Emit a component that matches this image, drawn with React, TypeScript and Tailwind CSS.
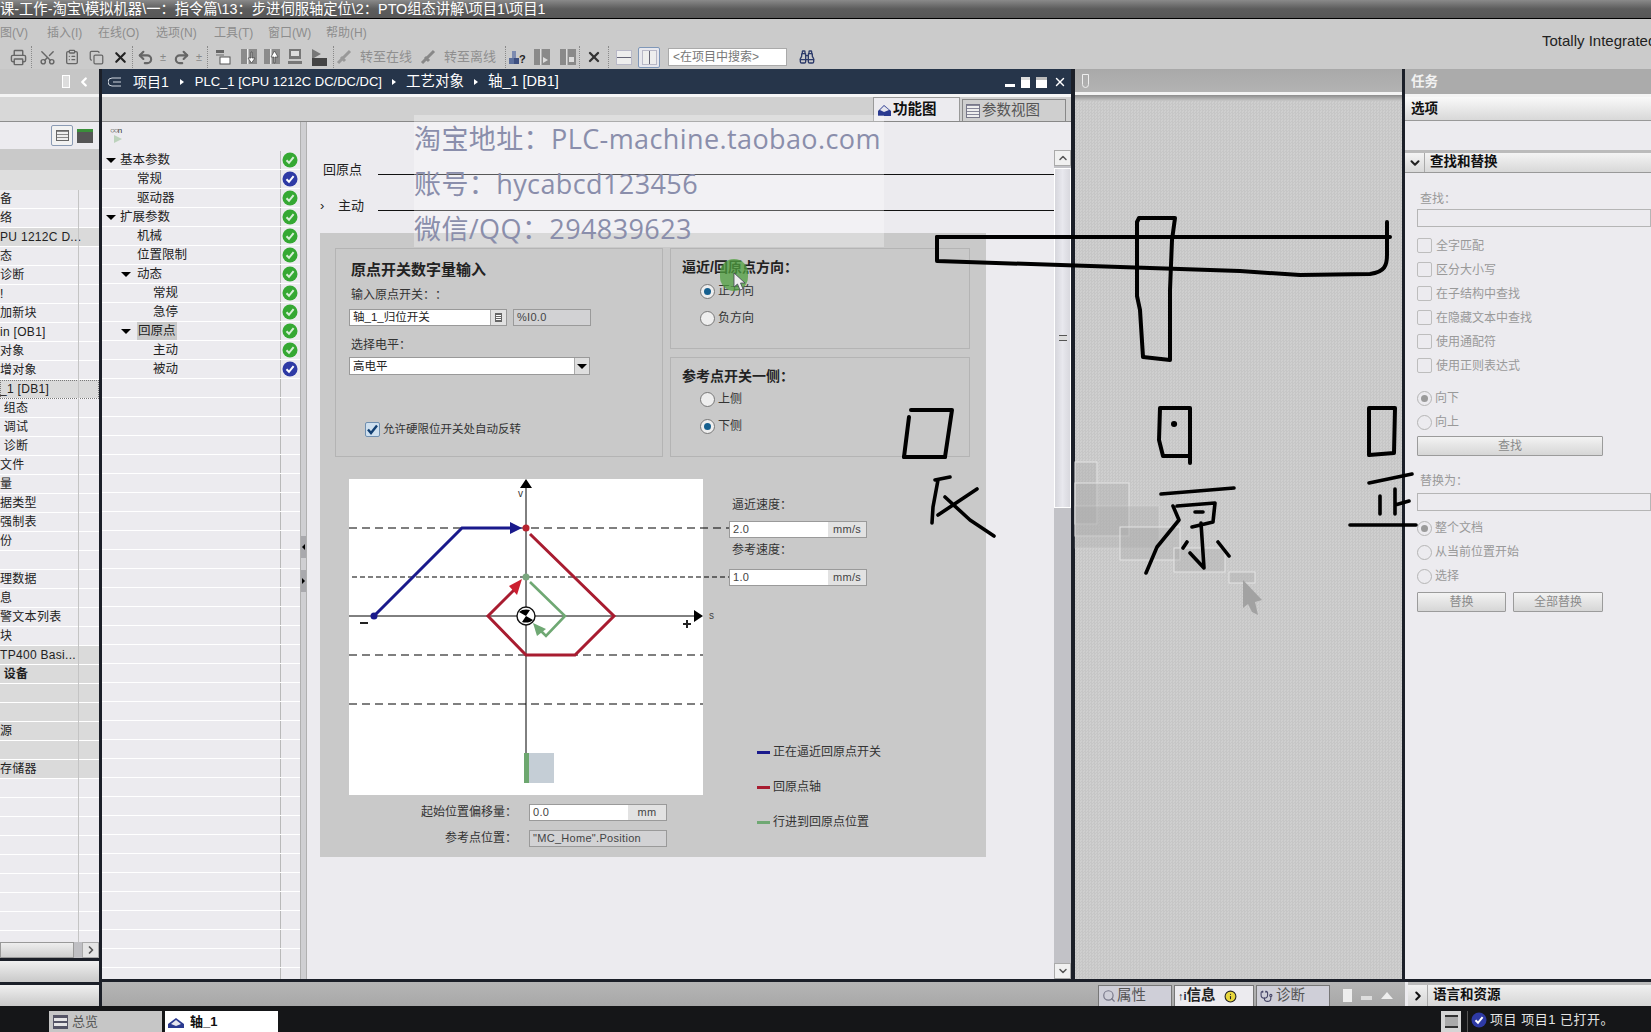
import { ChevronDown, ChevronLeft, ChevronRight, ChevronUp, Copy, Redo2, Scissors, Undo2, X, ClipboardList, Printer, Search, Info, Stethoscope, Binoculars } from 'lucide-react';

/* ---------- data ---------- */
const MENU = [
  { t: '图(V)', w: 'w-[47px]' },
  { t: '插入(I)', w: 'w-[51px]' },
  { t: '在线(O)', w: 'w-[58px]' },
  { t: '选项(N)', w: 'w-[58px]' },
  { t: '工具(T)', w: 'w-[54px]' },
  { t: '窗口(W)', w: 'w-[58px]' },
  { t: '帮助(H)', w: 'w-[50px]' },
];

const PROJECT = [
  { t: '备' }, { t: '络' }, { t: 'PU 1212C D...', g: 1 }, { t: '态' }, { t: '诊断' }, { t: '!' },
  { t: '加新块' }, { t: 'in [OB1]' }, { t: '对象' }, { t: '增对象' }, { t: '_1 [DB1]', sel: 1 },
  { t: ' 组态' }, { t: ' 调试' }, { t: ' 诊断' }, { t: '文件' }, { t: '量' }, { t: '据类型' },
  { t: '强制表' }, { t: '份' }, { t: '' }, { t: '理数据' }, { t: '息' }, { t: '警文本列表' }, { t: '块' },
  { t: 'TP400 Basi...', g: 1 }, { t: ' 设备', g: 1, b: 1 }, { t: '', g: 1 }, { t: '', g: 1 }, { t: '源', g: 1 },
  { t: '', g: 1 }, { t: '存储器', g: 1 },
];

const NAV = [
  { t: '基本参数', lvl: 0, arrow: true, ok: 'g' },
  { t: '常规', lvl: 1, ok: 'b' },
  { t: '驱动器', lvl: 1, ok: 'g' },
  { t: '扩展参数', lvl: 0, arrow: true, ok: 'g' },
  { t: '机械', lvl: 1, ok: 'g' },
  { t: '位置限制', lvl: 1, ok: 'g' },
  { t: '动态', lvl: 1, arrow: true, ok: 'g' },
  { t: '常规', lvl: 2, ok: 'g' },
  { t: '急停', lvl: 2, ok: 'g' },
  { t: '回原点', lvl: 1, arrow: true, ok: 'g', sel: true },
  { t: '主动', lvl: 2, ok: 'g' },
  { t: '被动', lvl: 2, ok: 'b' },
];

/* ---------- small drawings ---------- */
function Ok({ kind }: { kind: string }) {
  return (
    <svg width="16" height="16" viewBox="0 0 16 16">
      <circle cx="8" cy="8" r="7.5" fill={kind === 'g' ? '#35a833' : '#2e3aa5'} />
      <path d="M4.5 8.2 7 10.8 11.6 5.2" fill="none" stroke={kind === 'g' ? '#d8efd8' : '#fff'} strokeWidth="2" />
    </svg>
  );
}

function Tri() {
  return <span className="block w-0 h-0 border-x-[5px] border-x-transparent border-t-[5px] border-t-black" />;
}

function Crumb() {
  return <span className="block w-0 h-0 border-y-[3.5px] border-y-transparent border-l-[4px] border-l-white" />;
}

function Tool({ w, children }: { w: string; children?: React.ReactNode }) {
  return <div className={`${w} h-[24px] shrink-0 flex items-center justify-center text-[#666]`}>{children}</div>;
}

function Sep() {
  return <div className="w-px h-[22px] mx-[1px] shrink-0 border-l border-dotted border-[#8a8a8a]" />;
}

function BlockIcon({ d }: { d: string }) {
  return (
    <svg width="18" height="18" viewBox="0 0 18 18">
      <rect x="1" y="1" width="16" height="15" fill="#8b8b8b" />
      <rect x="7" y="1" width="1.5" height="15" fill="#eee" />
      <path d={d} fill="#fff" stroke="#333" strokeWidth="0.6" />
    </svg>
  );
}

function Field({ w, value, unit, grey }: { w: string; value: string; unit?: string; grey?: boolean }) {
  return (
    <div className={`${w} h-[17px] flex border border-[#9a9a9a] ${grey ? 'bg-[#d2d2d4]' : 'bg-white'} text-[11px] text-[#444] tracking-[0.3px]`}>
      <span className="flex-1 pl-[3px] leading-[15px] whitespace-nowrap overflow-hidden">{value}</span>
      {unit && <span className="w-[38px] text-center bg-[#e2e2e2] leading-[15px]">{unit}</span>}
    </div>
  );
}

function Radio({ on, off, label }: { on?: boolean; off?: boolean; label: string }) {
  const ring = off ? 'border-[#b5b5b5] bg-[#ecebef]' : 'border-[#777] bg-[#eeeeee]';
  return (
    <div className="flex items-center h-[16px]">
      <span className={`w-[15px] h-[15px] rounded-full border flex items-center justify-center ${ring}`}>
        {on && <span className={`w-[7px] h-[7px] rounded-full ${off ? 'bg-[#9a9a9a]' : 'bg-[#16608f]'}`} />}
      </span>
      <span className={`ml-[3px] ${off ? 'text-[#999]' : 'text-[#333]'}`}>{label}</span>
    </div>
  );
}

function DisCheck({ label }: { label: string }) {
  return (
    <div className="flex items-center h-[15px] mb-[9px]">
      <span className="w-[15px] h-[15px] rounded-[2px] border border-[#bdbdbd] bg-[#ecebef]" />
      <span className="ml-[4px] text-[#999]">{label}</span>
    </div>
  );
}

function Btn({ w, label }: { w: string; label: string }) {
  return (
    <div className={`${w} h-[20px] border border-[#9b9b9b] rounded-[1px] bg-gradient-to-b from-[#f3f3f3] to-[#d6d6d6] text-[#8a8a8a] text-center leading-[18px]`}>{label}</div>
  );
}

function Plot() {
  return (
    <svg width="380" height="316" viewBox="0 0 380 316" className="block shrink-0 font-['Liberation_Sans',sans-serif]">
      <rect width="354" height="316" fill="#fff" />
      <g stroke="#000" strokeWidth="1.1" strokeDasharray="8 5">
        <line x1="0" y1="49" x2="380" y2="49" />
        <line x1="3" y1="98" x2="380" y2="98" strokeDasharray="5 3" />
        <line x1="0" y1="176" x2="354" y2="176" />
        <line x1="0" y1="225" x2="354" y2="225" />
      </g>
      <line x1="0" y1="137" x2="346" y2="137" stroke="#000" />
      <line x1="177" y1="8" x2="177" y2="274" stroke="#000" />
      <path d="M354 137 345 131V143Z M177 0 171 9H183Z" fill="#000" />
      <text x="169" y="18" fontSize="10" fill="#333">v</text>
      <text x="360" y="140" fontSize="10" fill="#444">s</text>
      <path d="M11 144H19M334 145H342M338 141V149" stroke="#222" strokeWidth="2" />
      {/* blue */}
      <path d="M25 137 113 49H161" fill="none" stroke="#1a1a8c" strokeWidth="3" />
      <path d="M173 49 161 43V55Z" fill="#1a1a8c" />
      <circle cx="25" cy="137" r="3.5" fill="#1a1a8c" />
      {/* red */}
      <path d="M181 55 265 137 226 176H177L139 137 168 108" fill="none" stroke="#a81c30" strokeWidth="3" />
      <path d="M173 100 160 107 168 116Z" fill="#cc1f30" />
      <circle cx="177" cy="49" r="3.5" fill="#b8232f" />
      {/* green */}
      <path d="M181 103 216 137 197 157 190 150" fill="none" stroke="#6fa873" strokeWidth="2.6" />
      <path d="M184 144 188 157 197 150Z" fill="#6fa873" />
      <circle cx="177" cy="98" r="3.5" fill="#7aa67e" />
      {/* home */}
      <circle cx="177" cy="137" r="9" fill="#fff" stroke="#111" strokeWidth="1.4" />
      <path d="M170 133C173 130 178 130 181 131L177 137ZM184 141C181 144 176 144 173 143L177 137Z" fill="#000" />
      <rect x="179" y="274" width="26" height="30" fill="#c5ced6" />
      <rect x="175" y="274" width="5" height="30" fill="#6da76f" />
    </svg>
  );
}

/* ---------- page ---------- */
export default function App() {
  const blank = Array.from({ length: 34 });
  return (
    <div className="relative w-[1651px] h-[1032px] overflow-hidden bg-[#cbcbcb] text-[12px] text-[#222] [text-spacing-trim:space-all] font-['Liberation_Sans','Noto_Sans_CJK_SC',sans-serif]">
      {/* title */}
      <div className="h-[19px] border-b border-black bg-gradient-to-b from-[#8a8a8a] via-[#5c5c5c] to-[#575757] text-white text-[14.3px] leading-[18px] whitespace-nowrap overflow-hidden">
        课-工作-淘宝\模拟机器\一：指令篇\13：步进伺服轴定位\2：PTO组态讲解\项目1\项目1
      </div>

      {/* menu */}
      <div className="h-[26px] pt-[2px] flex items-center text-[#8d8d8d] whitespace-nowrap">
        {MENU.map((m) => (
          <span key={m.t} className={`${m.w} shrink-0`}>{m.t}</span>
        ))}
      </div>

      {/* toolbar */}
      <div className="h-[24px] flex items-center relative">
        <div className="w-[6px] shrink-0" />
        <Tool w="w-[24px]"><Printer size={17} /></Tool>
        <Sep />
        <Tool w="w-[28px]"><Scissors size={17} className="-rotate-90" /></Tool>
        <Tool w="w-[22px]"><ClipboardList size={16} /></Tool>
        <Tool w="w-[26px]"><Copy size={15} /></Tool>
        <Tool w="w-[22px]"><X size={17} strokeWidth={3} className="text-[#222]" /></Tool>
        <Sep />
        <Tool w="w-[22px]"><Undo2 size={17} strokeWidth={3} /></Tool>
        <Tool w="w-[14px]"><span className="text-[11px] text-[#888]">±</span></Tool>
        <Tool w="w-[22px]"><Redo2 size={17} strokeWidth={3} /></Tool>
        <Tool w="w-[14px]"><span className="text-[11px] text-[#888]">±</span></Tool>
        <Sep />
        <Tool w="w-[28px]"><svg width="16" height="16" viewBox="0 0 16 16"><rect x="1" y="1" width="8" height="3" fill="#666" /><rect x="1" y="5" width="8" height="2" fill="#999" /><rect x="5" y="8" width="10" height="7" fill="#fff" stroke="#555" /></svg></Tool>
        <Tool w="w-[23px]"><BlockIcon d="M12 4V10H15L11.5 15 8 10H11V4Z" /></Tool>
        <Tool w="w-[24px]"><BlockIcon d="M12 15V9H15L11.5 3 8 9H11V15Z" /></Tool>
        <Tool w="w-[22px]"><svg width="16" height="18" viewBox="0 0 16 18"><rect x="2" y="1" width="12" height="10" fill="#777" /><rect x="4" y="3" width="8" height="5" fill="#ddd" /><rect x="1" y="13" width="14" height="3" fill="#777" /></svg></Tool>
        <Tool w="w-[26px]"><svg width="18" height="18" viewBox="0 0 18 18"><path d="M2 1 11 6 2 11Z" fill="#777" /><rect x="2" y="10" width="15" height="8" fill="#444" /></svg></Tool>
        <Sep />
        <Tool w="w-[18px]"><svg width="17" height="17" viewBox="0 0 17 17"><path d="M2 14 14 2M5 8 9 12" stroke="#999" strokeWidth="3" /></svg></Tool>
        <span className="w-[52px] shrink-0 ml-[7px] text-[13px] text-[#8f8f8f] whitespace-nowrap">转至在线</span>
        <Tool w="w-[32px]"><svg width="17" height="17" viewBox="0 0 17 17"><path d="M2 14 14 2M5 8 9 12" stroke="#888" strokeWidth="3" /></svg></Tool>
        <span className="w-[60px] shrink-0 text-[13px] text-[#8f8f8f] whitespace-nowrap">转至离线</span>
        <Sep />
        <Tool w="w-[20px]"><svg width="18" height="16" viewBox="0 0 18 16"><rect x="1" y="9" width="5" height="6" fill="#5c6f9c" /><rect x="6" y="9" width="5" height="6" fill="#3d4f80" /><rect x="4" y="2" width="4" height="7" fill="#7d8bb0" /><text x="11" y="14" fontSize="11" fontWeight="700" fill="#222">?</text></svg></Tool>
        <Tool w="w-[30px]"><svg width="16" height="16" viewBox="0 0 16 16"><rect width="16" height="16" fill="#8a8a8a" /><rect x="6" width="1.5" height="16" fill="#ddd" /><path d="M9 8 14 11 9 14Z" fill="#ddd" /></svg></Tool>
        <Tool w="w-[21px]"><svg width="16" height="16" viewBox="0 0 16 16"><rect width="16" height="16" fill="#8a8a8a" /><rect x="6" width="1.5" height="16" fill="#ddd" /><rect x="9" y="8" width="5" height="5" fill="#ddd" /></svg></Tool>
        <Sep />
        <Tool w="w-[26px]"><X size={16} strokeWidth={3.5} className="text-[#333]" /></Tool>
        <Sep />
        <Tool w="w-[28px]"><span className="w-[16px] h-[15px] border border-[#b9b9c8] bg-[linear-gradient(#eee_45%,#667_45%,#667_55%,#eee_55%)]" /></Tool>
        <div className="w-[22px] h-[21px] shrink-0 border border-[#7f97b8] bg-[#e8e8ee] rounded-[2px] flex items-center justify-center"><span className="w-[15px] h-[15px] border border-[#b9b9c8] bg-[linear-gradient(90deg,#eee_45%,#667_45%,#667_55%,#eee_55%)]" /></div>
        <div className="w-[119px] h-[18px] shrink-0 ml-[8px] border border-[#aaa] bg-white text-[#777] leading-[16px] pl-[4px] whitespace-nowrap">&lt;在项目中搜索&gt;</div>
        <Tool w="w-[40px]"><Binoculars size={16} className="text-[#2c3a6a]" /></Tool>
        <div className="ml-auto text-[15px] text-[#222] whitespace-nowrap w-[109px] overflow-hidden -mt-[31px]">Totally Integrated</div>
      </div>

      {/* workspace */}
      <div className="flex h-[937px] bg-[#1b1f28]">
        {/* project tree */}
        <div className="w-[99px] shrink-0 flex flex-col overflow-hidden bg-[#ecebef]">
          <div className="h-[25px] shrink-0 bg-[#c6c6c6] flex items-center justify-end gap-[7px] pr-[8px] text-white">
            <span className="w-[8px] h-[13px] border border-white bg-[#ddd]" />
            <ChevronLeft size={14} strokeWidth={4} />
          </div>
          <div className="h-[3px] shrink-0 bg-[#f4f4f4]" />
          <div className="h-[25px] shrink-0 bg-[#d8d8d8] border-b border-[#8e8e8e]" />
          <div className="h-[27px] shrink-0 flex items-center justify-end gap-[4px] pr-[6px]">
            <span className="w-[22px] h-[21px] border border-[#8b9bb4] bg-[#f2f2f2] rounded-[2px] flex items-center justify-center"><span className="w-[13px] h-[11px] border border-[#666] bg-[linear-gradient(#888_1px,#eee_1px)] bg-[length:100%_3px]" /></span>
            <span className="w-[16px] h-[14px] bg-[#555] border-t-[3px] border-[#3a8f3a]" />
          </div>
          <div className="h-[21px] shrink-0 bg-[#c9c9c9]" />
          <div className="h-[20px] shrink-0 bg-[#dedede]" />
          <div className="flex-1 overflow-hidden relative">
            {PROJECT.map((r, i) => (
              <div
                key={i}
                className={`h-[19px] border-b border-white w-[99px] whitespace-pre text-[12px] tracking-[0.3px] leading-[18px] ${r.g ? 'bg-[#dadada]' : ''} ${r.b ? 'font-bold' : ''} ${r.sel ? 'bg-[#dadada] outline-1 -outline-offset-1 outline-dotted outline-[#777] w-[80px]' : ''}`}
              >
                {r.t}
              </div>
            ))}
            {blank.slice(0, 8).map((_, i) => (
              <div key={i} className="h-[19px] border-b border-white" />
            ))}
            <div className="absolute inset-y-0 left-[78px] w-px bg-[#c4c4c4]" />
          </div>
          <div className="h-[16px] shrink-0 flex">
            <div className="w-[74px] bg-gradient-to-b from-[#eee] to-[#cfcfcf] border border-[#999]" />
            <div className="w-[8px] bg-[#bfbfc3]" />
            <div className="w-[17px] bg-[#e5e5e5] border border-[#aaa] flex items-center justify-center"><ChevronRight size={12} strokeWidth={3.5} className="text-[#555]" /></div>
          </div>
          <div className="h-[3px] shrink-0 bg-[#1b1f28]" />
          <div className="h-[21px] shrink-0 bg-gradient-to-b from-[#f0f0f0] to-[#c9c9c9]" />
          <div className="h-[3px] shrink-0 bg-[#1b1f28]" />
          <div className="h-[21px] shrink-0 bg-gradient-to-b from-[#f0f0f0] to-[#c9c9c9]" />
        </div>
        <div className="w-[3px] shrink-0" />

        {/* editor + center + tasks */}
        <div className="flex-1 flex flex-col">
          <div className="flex h-[910px]">
            {/* editor */}
            <div className="w-[969px] shrink-0 flex flex-col bg-[#ecebef]">
              <div className="h-[25px] pt-[1px] shrink-0 bg-[#26354a] text-white flex items-center whitespace-nowrap">
                <svg width="14" height="10" viewBox="0 0 14 10" className="ml-[6px]"><path d="M13 1H4a4 4 0 0 0 0 8h9M13 5H5" fill="none" stroke="#cfd6de" /></svg>
                <span className="ml-[11px] text-[14px]">项目1</span>
                <span className="mx-[11px]"><Crumb /></span>
                <span className="text-[13px]">PLC_1 [CPU 1212C DC/DC/DC]</span>
                <span className="mx-[10px]"><Crumb /></span>
                <span className="text-[14.5px]">工艺对象</span>
                <span className="mx-[10px]"><Crumb /></span>
                <span className="text-[14.5px]">轴_1 [DB1]</span>
                <div className="ml-auto flex items-center gap-[6px] pr-[4px]">
                  <span className="w-[10px] h-[3px] bg-white mt-[7px]" />
                  <span className="w-[9px] h-[11px] bg-white border-t-[3px] border-[#ddd]" />
                  <span className="w-[11px] h-[11px] bg-white border-t-[3px] border-[#bbb]" />
                  <X size={14} strokeWidth={2.5} />
                </div>
              </div>
              <div className="h-[3px] shrink-0 bg-[#f6f6f6]" />
              <div className="h-[25px] shrink-0 bg-[#d0d0d0] border-b border-[#888] flex justify-end items-end pr-[5px] gap-[2px] text-[14.5px]">
                <div className="w-[87px] h-[24px] bg-[#ecebef] border border-b-0 border-[#999] flex items-center pl-[3px] font-bold text-[#111] whitespace-nowrap">
                  <svg width="15" height="13" viewBox="0 0 15 13"><path d="M1 13V8L7 2 14 8V13H1Z" fill="#2a3a90" /><path d="M3 7 7 3 12 7 7 9Z" fill="#e6e6ee" /></svg>
                  <span className="ml-[1px]">功能图</span>
                </div>
                <div className="w-[104px] h-[22px] bg-[#cfcfcf] border border-b-0 border-[#888] flex items-center pl-[3px] text-[#555] whitespace-nowrap">
                  <span className="w-[14px] h-[14px] border border-[#778] bg-[linear-gradient(#889_1px,#eee_1px)] bg-[length:100%_3px]" />
                  <span className="ml-[2px]">参数视图</span>
                </div>
              </div>

              <div className="h-[857px] flex overflow-hidden">
                {/* nav */}
                <div className="w-[198px] shrink-0 overflow-hidden">
                  <div className="h-[29px] flex flex-col items-start pl-[8px] pt-[4px]">
                    <span className="text-[8px] leading-[9px] text-[#333] tracking-[-1px]">○○n</span>
                    <span className="ml-[4px] w-0 h-0 border-y-[4px] border-y-transparent border-l-[8px] border-l-[#bcd2bc]" />
                  </div>
                  {NAV.map((n) => (
                    <div key={n.t + n.lvl + n.ok} className="h-[19px] flex border-b border-white">
                      <div className="w-[178px] flex items-center">
                        <div className={n.lvl === 0 ? 'w-[18px] flex justify-center' : n.lvl === 1 ? (n.arrow ? 'w-[35px] flex justify-end pr-[6px]' : 'w-[35px]') : 'w-[51px]'}>
                          {n.arrow && <Tri />}
                        </div>
                        <span className={`text-[12.5px] leading-[18px] ${n.sel ? 'bg-[#c9c9c9] px-[1px]' : ''} text-[#222]`}>{n.t}</span>
                      </div>
                      <div className="w-[20px] border-l border-[#b9b9b9] flex items-center justify-center pr-[1px]"><Ok kind={n.ok} /></div>
                    </div>
                  ))}
                  {blank.map((_, i) => (
                    <div key={i} className="h-[19px] flex border-b border-white">
                      <div className="w-[178px]" />
                      <div className="w-[20px] border-l border-[#b9b9b9]" />
                    </div>
                  ))}
                </div>

                {/* splitter */}
                <div className="w-[7px] shrink-0 bg-[#cfcfd2] border-x border-[#b0b0b0] flex flex-col">
                  <div className="h-[414px]" />
                  <div className="h-[22px] bg-[#a9a9ad] flex items-center justify-center"><span className="w-0 h-0 border-y-[3px] border-y-transparent border-r-[3px] border-r-black" /></div>
                  <div className="h-[12px]" />
                  <div className="h-[22px] bg-[#a9a9ad] flex items-center justify-center"><span className="w-0 h-0 border-y-[3px] border-y-transparent border-l-[3px] border-l-black" /></div>
                </div>

                {/* parameter area */}
                <div className="w-[747px] shrink-0 overflow-hidden">
                  <div className="h-[58px] flex items-end">
                    <span className="ml-[16px] text-[13px] leading-[20px] text-[#222] w-[55px]">回原点</span>
                    <span className="flex-1 h-px bg-[#111] mb-[5px]" />
                  </div>
                  <div className="h-[36px] flex items-end">
                    <span className="ml-[13px] w-[18px] text-[13px] leading-[20px]">›</span>
                    <span className="text-[13px] leading-[20px] w-[40px]">主动</span>
                    <span className="flex-1 h-px bg-[#111] mb-[5px]" />
                  </div>
                  <div className="mt-[17px] ml-[13px] w-[666px] h-[624px] bg-[#c9c9c9] pt-[15px] pl-[15px]">
                    <div className="flex gap-[7px] h-[209px]">
                      <div className="w-[328px] border border-[#b4b4b4] pl-[15px] pt-[11px]">
                        <div className="text-[15px] font-bold leading-[20px] text-[#222]">原点开关数字量输入</div>
                        <div className="mt-[6px] leading-[18px] text-[#333]">输入原点开关：：</div>
                        <div className="mt-[5px] -ml-[2px] flex gap-[6px]">
                          <div className="w-[158px] h-[17px] border border-[#999] bg-white flex text-[11.5px] leading-[15px] pl-[3px]">
                            <span className="flex-1">轴_1_归位开关</span>
                            <span className="w-[16px] border-l border-[#aaa] bg-[#e2e2e2] flex items-center justify-center"><span className="w-[7px] h-[9px] border border-[#666] bg-[linear-gradient(#666_1px,#fff_1px)] bg-[length:100%_2px]" /></span>
                          </div>
                          <Field w="w-[78px]" value="%I0.0" grey />
                        </div>
                        <div className="mt-[10px] leading-[18px] text-[#333]">选择电平：</div>
                        <div className="mt-[3px] -ml-[2px] w-[241px] h-[18px] border border-[#999] bg-white flex text-[11.5px] leading-[16px] pl-[3px]">
                          <span className="flex-1">高电平</span>
                          <span className="w-[15px] border-l border-[#aaa] bg-[#dedede] flex items-center justify-center"><Tri /></span>
                        </div>
                        <div className="mt-[46px] ml-[14px] flex items-center">
                          <span className="w-[15px] h-[15px] rounded-[2px] border border-[#6f8fb0] bg-[#cfe0ef] flex items-center justify-center"><svg width="11" height="11" viewBox="0 0 11 11"><path d="M1 5.5 4 9 10 1.5" fill="none" stroke="#123f72" strokeWidth="2.4" /></svg></span>
                          <span className="ml-[3px] text-[#333] text-[11.5px]">允许硬限位开关处自动反转</span>
                        </div>
                      </div>
                      <div className="w-[300px] flex flex-col gap-[8px]">
                        <div className="h-[101px] border border-[#b4b4b4] pl-[11px] pt-[8px]">
                          <div className="font-bold text-[14px] leading-[20px] text-[#222]">逼近/回原点方向：</div>
                          <div className="mt-[6px] ml-[18px]"><Radio on label="正方向" /></div>
                          <div className="mt-[11px] ml-[18px]"><Radio label="负方向" /></div>
                        </div>
                        <div className="h-[100px] border border-[#b4b4b4] pl-[11px] pt-[8px]">
                          <div className="font-bold text-[14px] leading-[20px] text-[#222]">参考点开关一侧：</div>
                          <div className="mt-[5px] ml-[18px]"><Radio label="上侧" /></div>
                          <div className="mt-[11px] ml-[18px]"><Radio on label="下侧" /></div>
                        </div>
                      </div>
                    </div>

                    <div className="flex mt-[22px] ml-[14px]">
                      <div className="w-[380px] shrink-0">
                        <Plot />
                        <div className="mt-[8px] flex items-center">
                          <span className="w-[168px] text-right text-[#333]">起始位置偏移量：</span>
                          <span className="ml-[12px]"><Field w="w-[138px]" value="0.0" unit="mm" /></span>
                        </div>
                        <div className="mt-[8px] flex items-center">
                          <span className="w-[168px] text-right text-[#333]">参考点位置：</span>
                          <span className="ml-[12px]"><Field w="w-[138px]" value={'"MC_Home".Position'} grey /></span>
                        </div>
                      </div>
                      <div className="flex flex-col">
                        <div className="mt-[17px] ml-[3px] leading-[18px] text-[#333]">逼近速度：</div>
                        <div className="mt-[7px]"><Field w="w-[138px]" value="2.0" unit="mm/s" /></div>
                        <div className="mt-[3px] ml-[3px] leading-[18px] text-[#333]">参考速度：</div>
                        <div className="mt-[10px]"><Field w="w-[138px]" value="1.0" unit="mm/s" /></div>
                        <div className="mt-[157px] ml-[28px] flex flex-col gap-[17px] text-[#333]">
                          <div className="flex items-center h-[18px] whitespace-nowrap"><span className="w-[13px] h-[3px] bg-[#1a1a8c] mr-[3px]" />正在逼近回原点开关</div>
                          <div className="flex items-center h-[18px] whitespace-nowrap"><span className="w-[13px] h-[3px] bg-[#a81c30] mr-[3px]" />回原点轴</div>
                          <div className="flex items-center h-[18px] whitespace-nowrap"><span className="w-[13px] h-[3px] bg-[#6fa873] mr-[3px]" />行进到回原点位置</div>
                        </div>
                      </div>
                    </div>
                  </div>
                </div>

                {/* scrollbar */}
                <div className="w-[17px] shrink-0 flex flex-col bg-[#c2c2c7]">
                  <div className="h-[28px] bg-[#ecebef]" />
                  <div className="h-[16px] border border-[#aaa] bg-[#f0f0f0] flex items-center justify-center"><ChevronUp size={12} strokeWidth={3} className="text-[#555]" /></div>
                  <div className="h-[340px] mt-[2px] border border-white bg-gradient-to-r from-[#d6d6dc] via-[#e8e8ee] to-[#d8d8de] flex items-center justify-center">
                    <span className="w-[8px] h-[6px] border-y border-[#555] bg-[linear-gradient(#ddd_40%,#555_40%,#555_60%,#ddd_60%)]" />
                  </div>
                  <div className="flex-1" />
                  <div className="h-[16px] border border-[#aaa] bg-[#f0f0f0] flex items-center justify-center"><ChevronDown size={12} strokeWidth={3} className="text-[#555]" /></div>
                </div>
              </div>
            </div>
            <div className="w-[4px] shrink-0" />

            {/* center grey */}
            <div className="w-[327px] shrink-0 flex flex-col">
              <div className="h-[23px] bg-gradient-to-b from-[#a9a9a9] to-[#b3b3b3] flex items-center pl-[7px]">
                <span className="w-[7px] h-[14px] border border-[#eee] rounded-b-full" />
              </div>
              <div className="h-[3px] bg-[#f4f4f4]" />
              <div className="h-[6px] bg-gradient-to-b from-[#8c8c8c] to-[#c9c9c9]" />
              <div className="flex-1 bg-[repeating-conic-gradient(#c6c6c6_0_25%,#cfcfcf_0_50%)] bg-[length:3px_3px]" />
            </div>
            <div className="w-[3px] shrink-0" />

            {/* tasks */}
            <div className="w-[246px] shrink-0 flex flex-col bg-[#ecebef]">
              <div className="h-[25px] pt-[1px] bg-[#ababab] text-[#f2f2f2] font-bold text-[13.5px] pl-[6px] leading-[24px]">任务</div>
              <div className="h-[3px] bg-[#f4f4f4]" />
              <div className="h-[24px] pt-[2px] bg-gradient-to-b from-[#fafafa] to-[#d8d8d8] border-b border-[#999] font-bold text-[13.5px] pl-[6px] leading-[20px] text-[#111]">选项</div>
              <div className="h-[29px] shrink-0" />
              <div className="h-[23px] border-t-[3px] border-[#bbbbbb] border-b border-b-[#999] bg-gradient-to-b from-[#f4f4f4] to-[#d8d8d8] flex items-center">
                <div className="w-[20px] h-full border-r border-[#aaa] flex items-center justify-center"><ChevronDown size={14} strokeWidth={3.5} className="text-[#222]" /></div>
                <span className="pl-[5px] font-bold text-[13.5px] text-[#111]">查找和替换</span>
              </div>
              <div className="pl-[12px] text-[#999]">
                <div className="mt-[17px] pl-[3px] leading-[18px]">查找：</div>
                <div className="h-[18px] mt-[1px] border border-[#b5b5b5]" />
                <div className="mt-[11px]">
                  <DisCheck label="全字匹配" />
                  <DisCheck label="区分大小写" />
                  <DisCheck label="在子结构中查找" />
                  <DisCheck label="在隐藏文本中查找" />
                  <DisCheck label="使用通配符" />
                  <DisCheck label="使用正则表达式" />
                </div>
                <div className="mt-[17px] flex flex-col gap-[8px]">
                  <Radio on off label="向下" />
                  <Radio off label="向上" />
                </div>
                <div className="mt-[6px]"><Btn w="w-[186px]" label="查找" /></div>
                <div className="mt-[16px] pl-[3px] leading-[18px]">替换为：</div>
                <div className="h-[18px] mt-[3px] border border-[#b5b5b5]" />
                <div className="mt-[9px] flex flex-col gap-[8px]">
                  <Radio on off label="整个文档" />
                  <Radio off label="从当前位置开始" />
                  <Radio off label="选择" />
                </div>
                <div className="mt-[8px] flex gap-[7px]">
                  <Btn w="w-[89px]" label="替换" />
                  <Btn w="w-[90px]" label="全部替换" />
                </div>
              </div>
            </div>
          </div>

          {/* lower bar */}
          <div className="h-[3px] shrink-0 w-[1303px]" />
          <div className="flex h-[24px] shrink-0">
            <div className="w-[1303px] shrink-0 bg-gradient-to-b from-[#b5b5b5] to-[#a8a8a8] flex items-end justify-end text-[14.5px]">
              <div className="w-[74px] h-[21px] bg-[#cfcfd8] border border-b-0 border-[#777] flex items-center pl-[3px] text-[#555] whitespace-nowrap"><Search size={14} className="text-[#778]" /><span className="ml-[1px]">属性</span></div>
              <div className="w-[80px] h-[21px] ml-[2px] bg-[#ecebef] border border-b-0 border-[#777] flex items-center pl-[3px] font-bold text-[#222] whitespace-nowrap"><span className="text-[11px] text-[#123]">↑i</span><span>信息</span><Info size={13} className="ml-[8px] text-[#222] fill-[#e7d63c]" /></div>
              <div className="w-[74px] h-[21px] ml-[2px] bg-[#cfcfd8] border border-b-0 border-[#777] flex items-center pl-[3px] text-[#555] whitespace-nowrap"><Stethoscope size={13} className="text-[#446]" /><span className="ml-[3px]">诊断</span></div>
              <div className="w-[75px] h-[21px] flex items-center justify-center gap-[9px]">
                <span className="w-[9px] h-[13px] bg-[#eee]" />
                <span className="w-[11px] h-[4px] bg-[#ddd] mt-[5px]" />
                <span className="w-0 h-0 border-x-[6px] border-x-transparent border-b-[7px] border-b-[#eee]" />
              </div>
            </div>
            <div className="w-[3px] shrink-0 bg-[#ecebef]" />
            <div className="w-[246px] shrink-0 bg-gradient-to-b from-[#f0f0f0] to-[#d6d6d6] border-t-[3px] border-[#bbb] flex items-center">
              <div className="w-[20px] h-full border-r border-[#aaa] flex items-center justify-center"><ChevronRight size={14} strokeWidth={3.5} className="text-[#111]" /></div>
              <span className="pl-[5px] font-bold text-[13.5px] text-[#111]">语言和资源</span>
            </div>
          </div>
        </div>
      </div>

      {/* task bar */}
      <div className="h-[26px] bg-[#151618] flex items-end pl-[49px] text-[13px]">
        <div className="w-[113px] h-[21px] bg-[#c6c6c6] flex items-center pl-[4px] text-[#555] whitespace-nowrap">
          <span className="w-[15px] h-[14px] border border-[#556] bg-[linear-gradient(#556_2px,#e6e6e6_2px)] bg-[length:100%_5px]" />
          <span className="ml-[4px]">总览</span>
        </div>
        <div className="w-[113px] h-[21px] ml-[3px] bg-white flex items-center pl-[3px] font-bold text-[#111] whitespace-nowrap">
          <svg width="17" height="12" viewBox="0 0 17 12"><path d="M0 12V8L8 2 16 8V12H0Z" fill="#2a3a90" /><path d="M3 8 8 4 13 8 8 10Z" fill="#e6e6ee" /></svg>
          <span className="ml-[5px]">轴_1</span>
        </div>
        <div className="ml-auto flex items-end h-full">
          <span className="w-[20px] h-[21px] bg-[#d5d5d5] flex items-center justify-center"><span className="w-[13px] h-[13px] border-y-2 border-[#333] bg-[#aaa]" /></span>
          <span className="w-px h-[21px] bg-[#555] ml-[6px]" />
          <span className="flex items-center h-[24px] ml-[3px] pr-[37px] text-[#e4e4e4] whitespace-nowrap">
            <Ok kind="b" />
            <span className="ml-[3px] tracking-[0.5px]">项目 项目1 已打开。</span>
          </span>
        </div>
      </div>

      {/* click marker */}
      <div className="absolute left-[720px] top-[259px] w-[28px] h-[32px] rounded-full bg-[#4f9f3f]/75" />
      <svg className="absolute left-[733px] top-[272px]" width="14" height="20" viewBox="0 0 14 20"><path d="M1 1V15L4.5 12 7 18 10 17 7.5 11H12Z" fill="#eee" stroke="#445" strokeWidth="0.8" /></svg>

      {/* watermark */}
      <div className="absolute left-[414px] top-[115px] w-[470px] h-[132px] bg-white/30 pointer-events-none text-[27px] tracking-[0.4px] text-[#8a8eab] font-['Open_Sans','Noto_Sans_CJK_SC',sans-serif] leading-[45px] pt-[1px] whitespace-nowrap">
        <div>淘宝地址：PLC-machine.taobao.com</div>
        <div>账号：hycabcd123456</div>
        <div>微信/QQ：294839623</div>
      </div>

      {/* handwritten strokes and faded logo, over the whole window */}
      <svg className="absolute inset-0 pointer-events-none" width="1651" height="1032" viewBox="0 0 1651 1032">
        <g stroke="#e4e4e4" strokeWidth="1" fill="#a8a8a8" fillOpacity="0.35">
          <rect x="1075" y="462" width="22" height="62" />
          <rect x="1075" y="483" width="54" height="53" />
          <rect x="1075" y="506" width="84" height="42" strokeOpacity="0.3" />
          <rect x="1120" y="527" width="60" height="33" />
          <rect x="1174" y="548" width="51" height="24" />
          <rect x="1229" y="572" width="26" height="11" />
        </g>
        <path d="M1243 580 1262 600 1255 602 1258 615 1252 612 1248 604 1243 608Z" fill="#a2a2a2" />
        <g fill="none" stroke="#000" strokeWidth="4" strokeLinecap="round" strokeLinejoin="round">
          {/* beam */}
          <path d="M937 237H1390" />
          <path d="M937 237V261L1120 267 1240 271 1300 275 1370 274C1385 272 1387 265 1387 255V222" />
          <path d="M1139 218H1175L1172 240 1170 290V360L1143 357 1140 310 1137 296V222Z" />
          {/* 反 */}
          <path d="M911 410H952L945 457M904 457 909 417" />
          <path d="M904 457H945" />
          <path d="M935 480 950 477M938 480 933 507 932 523M938 515 977 489M945 497 970 520 994 536" strokeWidth="3.6" />
          {/* 原 */}
          <path d="M1160 408H1190V463M1160 408 1159 440 1163 456H1190" />
          <path d="M1174 424h.1" strokeWidth="6" />
          <path d="M1161 494 1234 488M1173 506 1179 520 1157 547 1146 573M1177 506 1215 503 1213 522 1192 527M1195 512 1203 512M1201 523 1204 568 1190 553M1187 542 1183 548M1218 542 1229 556" strokeWidth="3.6" />
          {/* 正 */}
          <path d="M1369 408H1395L1394 453 1369 455Z" />
          <path d="M1369 483 1412 474M1380 496V514M1395 489V514M1395 505 1409 501M1350 525H1416" strokeWidth="3.6" />
        </g>
      </svg>
    </div>
  );
}
